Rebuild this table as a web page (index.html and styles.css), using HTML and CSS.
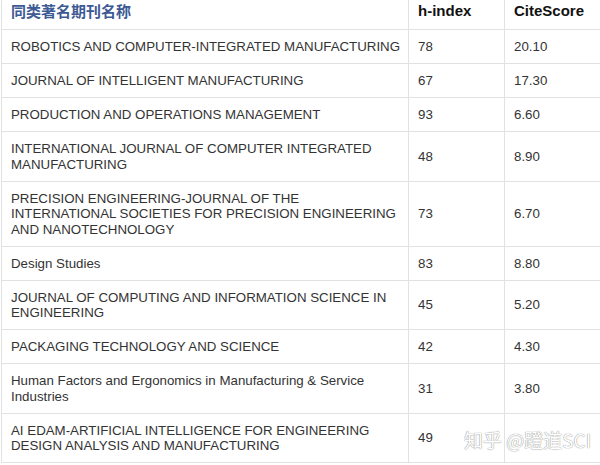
FILE: index.html
```html
<!DOCTYPE html>
<html lang="zh">
<head>
<meta charset="utf-8">
<link rel="stylesheet" href="styles.css">
</head>
<body>
<div class="wrap">
<table class="journals">
  <thead>
    <tr>
      <th class="name cn">同类著名期刊名称</th>
      <th class="num">h-index</th>
      <th class="score">CiteScore</th>
    </tr>
  </thead>
  <tbody>
    <tr><td>ROBOTICS AND COMPUTER-INTEGRATED MANUFACTURING</td><td>78</td><td>20.10</td></tr>
    <tr><td>JOURNAL OF INTELLIGENT MANUFACTURING</td><td>67</td><td>17.30</td></tr>
    <tr><td>PRODUCTION AND OPERATIONS MANAGEMENT</td><td>93</td><td>6.60</td></tr>
    <tr><td>INTERNATIONAL JOURNAL OF COMPUTER INTEGRATED<br>MANUFACTURING</td><td>48</td><td>8.90</td></tr>
    <tr><td>PRECISION ENGINEERING-JOURNAL OF THE<br>INTERNATIONAL SOCIETIES FOR PRECISION ENGINEERING<br>AND NANOTECHNOLOGY</td><td>73</td><td>6.70</td></tr>
    <tr><td>Design Studies</td><td>83</td><td>8.80</td></tr>
    <tr><td>JOURNAL OF COMPUTING AND INFORMATION SCIENCE IN<br>ENGINEERING</td><td>45</td><td>5.20</td></tr>
    <tr><td>PACKAGING TECHNOLOGY AND SCIENCE</td><td>42</td><td>4.30</td></tr>
    <tr><td>Human Factors and Ergonomics in Manufacturing &amp; Service<br>Industries</td><td>31</td><td>3.80</td></tr>
    <tr><td>AI EDAM-ARTIFICIAL INTELLIGENCE FOR ENGINEERING<br>DESIGN ANALYSIS AND MANUFACTURING</td><td>49</td><td></td></tr>
  </tbody>
</table>
<div class="watermark">知乎 @蹬道SCI</div>
</div>
</body>
</html>
```
FILE: styles.css
```css
html, body {
  margin: 0;
  padding: 0;
  background: #fff;
}
.wrap {
  position: relative;
  width: 600px;
  height: 465px;
  overflow: hidden;
}
.journals {
  margin-left: 1px;
  border-collapse: collapse;
  border-left: 1px solid #e2e2e2;
  font-family: "Liberation Sans", Arial, sans-serif;
  font-size: 13.3px;
  color: #333;
  width: 620px;
  table-layout: fixed;
}
.journals th {
  text-align: left;
  font-size: 15px;
  font-weight: bold;
  color: #111;
  padding: 2px 9px 9px;
  line-height: 18px;
  border-bottom: 1px solid #e2e2e2;
  border-right: 1px solid #e2e2e2;
}
.journals th.cn {
  color: #3d5a94;
  font-family: "Noto Sans CJK SC", "Liberation Sans", sans-serif;
  font-size: 15px;
}
.journals th.name { width: 388px; }
.journals th.num { width: 77px; }
.journals td {
  padding: 9px 9px 8.5px;
  line-height: 15.5px;
  vertical-align: middle;
  border-bottom: 1px solid #e2e2e2;
  border-right: 1px solid #e2e2e2;
  white-space: nowrap;
}
.watermark {
  position: absolute;
  left: 464px;
  top: 426px;
  font-family: "Noto Sans CJK SC", sans-serif;
  font-size: 19px;
  color: #fff;
  text-shadow: 0 0 1px #888, 0 0 1px #aaa;
}
```
